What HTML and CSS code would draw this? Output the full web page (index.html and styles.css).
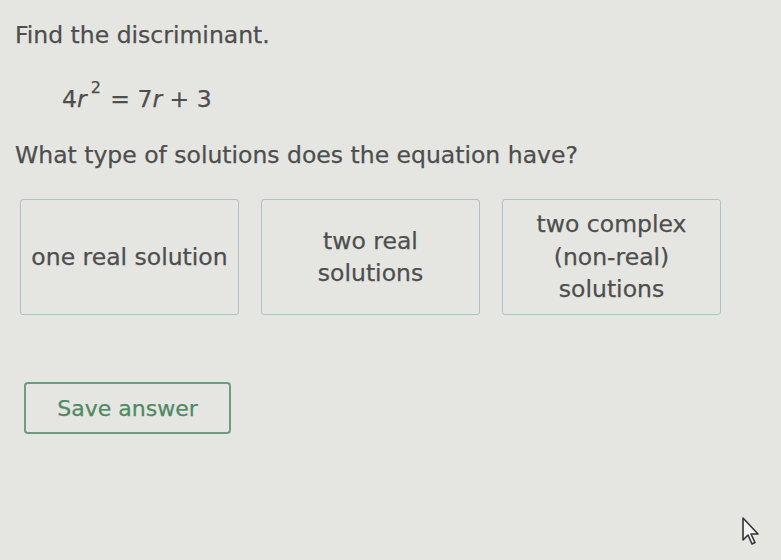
FILE: index.html
```html
<!DOCTYPE html>
<html>
<head>
<meta charset="utf-8">
<link rel="stylesheet" href="styles.css">
</head>
<body>
<div class="page">
  <p class="prompt">Find the discriminant.</p>
  <p class="equation">4<i>r</i><sup>2</sup> = 7<i>r</i> + 3</p>
  <p class="question">What type of solutions does the equation have?</p>
  <div class="choices">
    <div class="choice">one real solution</div>
    <div class="choice">two real<br>solutions</div>
    <div class="choice">two complex<br>(non-real)<br>solutions</div>
  </div>
  <button class="save">Save answer</button>
</div>
<svg class="cursor" width="20" height="30" viewBox="0 0 20 30"><path d="M2 2 L2 24 L7 19 L11 28 L14 26.5 L10 18 L17 18 Z" fill="#f4f4f2" stroke="#333" stroke-width="1.6" stroke-linejoin="round"/></svg>
</body>
</html>
```
FILE: styles.css
```css
html, body {
  margin: 0;
  padding: 0;
  background: #e5e5e2;
  width: 781px;
  height: 560px;
  overflow: hidden;
}
.page {
  font-family: "DejaVu Sans", Verdana, sans-serif;
  color: #4e4e4e;
  font-size: 23.5px;
  -webkit-text-stroke: 0.25px currentColor;
  padding: 21px 0 0 15px;
}
p { margin: 0; }
.prompt { line-height: 28px; }
.equation {
  margin: 36px 0 0 47px;
  line-height: 28px;
}
.equation i { font-style: italic; }
.equation sup { font-size: 16px; vertical-align: 14px; line-height: 0; margin-left: 4px; margin-right: 2px; }
.question { margin-top: 28px; line-height: 28px; }
.choices {
  display: flex;
  gap: 22px;
  margin: 30px 0 0 5px;
}
.choice {
  width: 219px;
  height: 116px;
  box-sizing: border-box;
  border: 1.5px solid #a9c3c7;
  border-radius: 3px;
  display: flex;
  align-items: center;
  justify-content: center;
  text-align: center;
  line-height: 32.5px;
}
.save {
  display: block;
  margin: 67px 0 0 9px;
  width: 207px;
  height: 52px;
  border: 2px solid #6f9c7c;
  border-radius: 4px;
  background: transparent;
  color: #4f8962;
  font-family: "DejaVu Sans", Verdana, sans-serif;
  font-size: 22px;
  -webkit-text-stroke: 0.25px currentColor;
  padding: 0;
}
.cursor {
  position: absolute;
  left: 741px;
  top: 516px;
}
```
